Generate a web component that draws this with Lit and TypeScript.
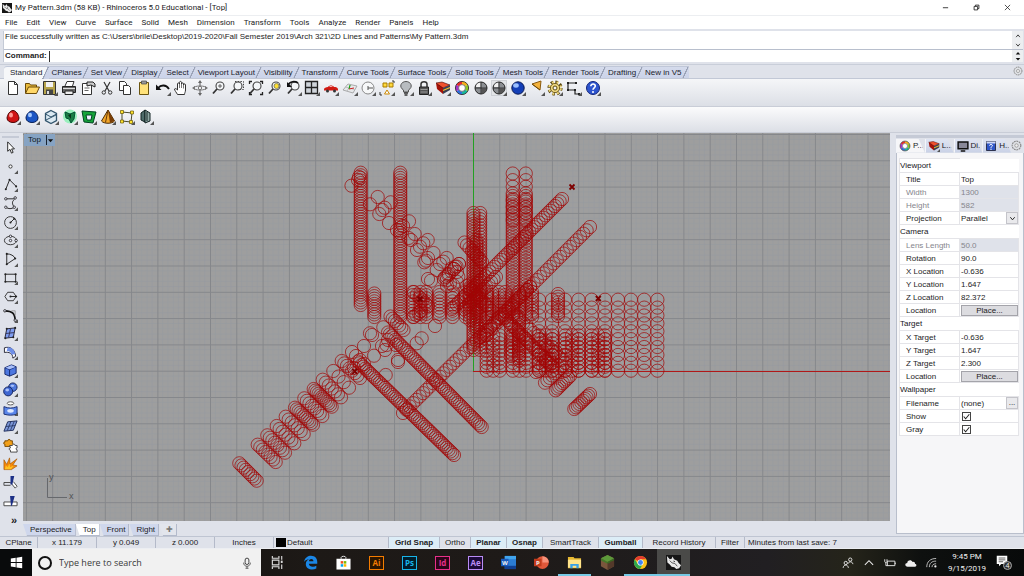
import { LitElement, html, svg, css } from "lit";
import { customElement } from "lit/decorators.js";
import { classMap } from "lit/directives/class-map.js";

type Pt = [number, number];

/* ---------- drawing geometry ---------- */

const R = 6.6;

function run(x1: number, y1: number, x2: number, y2: number, n: number): Pt[] {
  const out: Pt[] = [];
  for (let i = 0; i < n; i++) {
    const t = n > 1 ? i / (n - 1) : 0;
    out.push([x1 + (x2 - x1) * t, y1 + (y2 - y1) * t]);
  }
  return out;
}

const pattern: Pt[] = [
  ...run(360.7, 172.7, 360.7, 305, 52),
  ...run(400.3, 172.7, 400.3, 317, 56),
  ...run(374.3, 293.5, 374.3, 317, 10),
  [351.5, 185.7], [359, 177], [358, 180],
  [377.7, 197], [370, 204.3], [384.7, 207.7], [390.7, 202.3], [379.3, 214], [382.3, 210],
  [389, 223], [409, 221.3], [403, 226], [397, 230], [400, 233], [414.7, 234], [408.5, 238],
  [411, 240], [427.7, 240], [417, 250], [420, 246.7], [423.3, 243.3], [433.5, 253],
  [426, 260.7], [424.3, 262.3], [428, 258], [446.7, 258], [443.3, 261.7], [440, 264],
  [459, 264], [455, 266.7], [451.7, 268.3], [436.7, 270], [428, 279], [431, 280.7],
  [445, 277.3], [448.3, 275], [450, 283.3], [456.7, 281.7], [458.3, 276.7], [446.7, 280],
  [454, 269], [457, 272], [447, 286], [453, 285],
  ...run(444, 279, 459, 264, 7),
  ...run(464.5, 242.5, 482, 262, 8),
  ...run(473.5, 213, 473.5, 350, 52),
  ...run(480.2, 213, 480.2, 350, 46),
  ...run(476.5, 240, 476.5, 330, 34),
  ...run(470, 284, 470, 320, 12),
  ...run(464, 309, 496, 277, 14),
  ...run(467, 286, 492, 311, 10),
  ...run(512.7, 173.5, 512.7, 220, 8),
  ...run(525.8, 173.5, 525.8, 220, 8),
  ...run(512.7, 196, 512.7, 317, 44),
  ...run(525.8, 196, 525.8, 317, 44),
  ...run(562, 199, 452, 309, 48),
  [435, 326], [421.7, 338.3], [416.7, 343.3], [398, 362], [385.7, 375],
  ...run(590, 227, 527, 290, 20),
  ...run(527, 290, 480, 337, 14),
  ...run(480, 337, 403, 413, 24),
  ...[412.8, 420.5, 426.2, 439.5, 452.5, 465.8, 487, 492, 499, 505, 519, 532].flatMap((x) =>
    run(x, 292, x, 317, 9)
  ),
  ...run(414, 292, 428, 306, 6),
  ...run(414, 317, 421, 311, 4),
  ...run(484, 336, 512, 308, 9),
  ...run(490, 327, 530, 287, 14),
  ...[539, 552, 565, 578.5, 591.7, 605, 618, 631, 644.2, 657.4].flatMap((x) =>
    run(x, 299.7, x, 370.7, 10)
  ),
  ...run(558, 294, 558, 316, 9),
  ...[486.6, 499.7, 512.8, 526, 539, 552.2, 565.3, 578.5, 591.7, 604.8].flatMap((x) =>
    run(x, 335.3, x, 370.7, 10)
  ),
  ...[493.2, 519.4, 545.7, 572, 598.2].flatMap((x) => run(x, 335.3, x, 370.7, 8)),
  ...run(486.6, 318, 486.6, 335, 5),
  ...run(505, 318, 552, 366, 24),
  ...run(516, 316, 562, 360, 14),
  ...run(519, 318, 519, 358, 18),
  ...run(511, 326, 511, 356, 10),
  ...run(536, 372, 556, 352, 7),
  ...run(545, 382.7, 562, 366, 8),
  ...run(555.7, 390.3, 570, 376, 9),
  ...run(574.3, 409, 590, 394, 10),
  ...run(358, 361.5, 454, 455, 54),
  ...run(388, 332.5, 481.7, 427, 52),
  ...run(390.5, 316.5, 403.5, 330, 7),
  ...run(239.3, 463.3, 256.7, 480.7, 9),
  ...run(257.7, 444.7, 275.7, 462, 8),
  ...run(267.3, 435.3, 285, 452.7, 8),
  ...run(276.7, 426, 294.3, 443.3, 7),
  ...run(285.7, 416.7, 303.7, 434, 7),
  ...run(295, 407.7, 313, 424.7, 11),
  ...run(304.3, 398.3, 322.3, 416, 8),
  ...run(313.7, 389, 331.7, 406.7, 12),
  ...run(322.7, 379.7, 341, 397.3, 7),
  ...run(333.3, 371, 349, 387.7, 4),
  ...run(341.7, 361, 360, 378, 8),
  ...run(352, 352, 364, 364, 4),
  [364, 346], [370, 333.3], [372, 335], [383.3, 327.3], [374, 355.7], [385, 350], [382, 346],
  [386.5, 345], [388, 340], [396, 345], [354, 368], [398, 360],
];

const marks: Pt[] = [[572, 187], [598.3, 298.5], [354.7, 371.3], [420, 299]];

/* ---------- icon artwork, 16 x 16 ---------- */

const fly = svg`<path d="M16 12v4h-4z" fill="#555"/>`;
const dot = (x: number, y: number) => svg`<circle cx=${x} cy=${y} r="1.1" fill="#222"/>`;
const ring = (x: number, y: number) =>
  svg`<circle cx=${x} cy=${y} r="1.3" fill="#eef" stroke="#222" stroke-width=".9"/>`;
const lens = svg`<circle cx="9" cy="6" r="4" fill="#f4f6f8" stroke="#444" stroke-width="1.1"/><path d="M6 9l-4 4.500" stroke="#333" stroke-width="1.800"/>`;
const glassBall = svg`<circle cx="8" cy="8" r="6" fill="#8c8f93" stroke="#222"/><path d="M3 7c0-3 2-4 4.500-4.500V7z" fill="#f2f2f2"/><path d="M8.500 8.500h5c-.5 3-2 5-5 5z" fill="#555"/><path d="M8 2v12M2 8h12" fill="none" stroke="#222" stroke-width=".8"/>`;

const art: Record<string, unknown> = {
  New: svg`<path d="M3.500 1.500h6l3 3v10h-9z" fill="#fff" stroke="#333"/><path d="M9.500 1.500v3h3" fill="none" stroke="#333"/>`,
  Open: svg`<path d="M1.500 13V3.500h4l1 1.500h6v2" fill="#e9bb3c" stroke="#6b4a08"/><path d="M1.500 13.500l3-6.500h11l-3 6.500z" fill="#ffd768" stroke="#6b4a08"/>`,
  Save: svg`<path d="M1.500 1.500h12v13h-12z" fill="#b5a24a" stroke="#333"/><path d="M4 2h7v5H4z" fill="#f2f2f2"/><path d="M4 9.500h7v5H4z" fill="#444"/><path d="M5 11h2v3H5z" fill="#ddd"/>${fly}`,
  Print: svg`<path d="M4 6l2-4.500h7L11.500 6" fill="#fff" stroke="#333"/><path d="M1.500 6.500h13v6h-13z" fill="#666" stroke="#222"/><path d="M2 8.500h12" stroke="#ddd"/><path d="M4 11h8v3.500H4z" fill="#eee" stroke="#222"/>`,
  Properties: svg`<path d="M2.500 3.500h9v11h-9z" fill="#fff" stroke="#333"/><path d="M7 2h6l2 2v3l-4-2-4 1z" fill="#ccc" stroke="#222"/><path d="M4.500 8h5M4.500 10.500h4" stroke="#666"/>`,
  Cut: svg`<path d="M5 2l5 9M11 2l-5 9" stroke="#333" stroke-width="1.200"/><circle cx="4.800" cy="12.500" r="1.700" fill="none" stroke="#333"/><circle cx="11.200" cy="12.500" r="1.700" fill="none" stroke="#333"/>`,
  Copy: svg`<path d="M2.500 1.500h5l2 2v7h-7z" fill="#fff" stroke="#333"/><path d="M6.500 5.500h5l2 2v7h-7z" fill="#fff" stroke="#333"/>`,
  Paste: svg`<path d="M3.500 2.500h9v12h-9z" fill="#ffe27a" stroke="#6b5510"/><path d="M5.500 1h5v3h-5z" fill="#999" stroke="#444" stroke-width=".7"/>`,
  Undo: svg`<path d="M3 8c3-3.500 8-3.500 11 1" fill="none" stroke="#111" stroke-width="1.800"/><path d="M1 4.500V10h5.500z" fill="#111"/>${fly}`,
  Pan: svg`<path d="M4.500 14.500c-1-2-3-4-3-5.500 1-1 2 0 3 1V4c0-1.500 2-1.500 2 0V2.500c0-1.500 2-1.500 2 0V4c0-1.500 2-1.500 2 0v1c0-1.500 2-1.500 2 0v5c0 2-1 3-1 4.500z" fill="#fff" stroke="#333"/><path d="M6.500 4v4M8.500 4v4M10.500 5v3.500" stroke="#555" stroke-width=".8"/>`,
  Rotate: svg`<path d="M8 2v12" stroke="#555"/><path d="M8 0l2 3H6zM8 16l2-3H6z" fill="#666"/><ellipse cx="8" cy="8" rx="6.500" ry="2" fill="none" stroke="#777"/><path d="M0 8l3-2v4zM16 8l-3-2v4z" fill="#777"/><circle cx="8" cy="8" r="1.600" fill="#fff" stroke="#777"/>`,
  Zoom: svg`${lens}<path d="M7 6h4M9 4v4" stroke="#555" stroke-width=".9"/>`,
  "Zoom Window": svg`${lens}<path d="M6 1.500h8.500v8H9" fill="none" stroke="#444" stroke-dasharray="1.500 1.200"/>`,
  "Zoom Extents": svg`${lens}<path d="M1.500 4V1.500H4M12 1.500h2.500V4M14.500 12v2.500H12M4 14.500H1.500V12" fill="none" stroke="#222" stroke-width="1.300"/>`,
  "Zoom Selected": svg`${lens}<circle cx="9.500" cy="6" r="2.500" fill="#ffdf2e" stroke="#886"/>`,
  "Undo View": svg`${lens}<path d="M2 5c2-4 7-4 10-2" fill="none" stroke="#111" stroke-width="1.700"/><path d="M1 2v5h5z" fill="#111"/>${fly}`,
  "Four Views": svg`<path d="M1.500 1.500h12v12h-12z" fill="#cfd4da" stroke="#222" stroke-width="1.300"/><path d="M7.500 1v13M1 7.500h13" stroke="#222" stroke-width="1.300"/>${fly}`,
  Car: svg`<path d="M1 9.500c0-2 2-2 4-2.500 1-2 5-2 6 0 2 0 4 .5 4 2.500v1H1z" fill="#d11a12"/><path d="M6 7c.7-1 3-1 4 0z" fill="#fff"/><circle cx="4.500" cy="11" r="1.500" fill="#333"/><circle cx="11.500" cy="11" r="1.500" fill="#333"/>${fly}`,
  CPlane: svg`<path d="M1 10l5-6 9 2-4 7z" fill="#e6e8ea" stroke="#999" stroke-width=".8"/><path d="M3.500 7l9 2.500M9 5l-4 6" stroke="#aaa" stroke-width=".7"/><path d="M7 9l1-4" stroke="#0a0" /><path d="M7 9l5-1" stroke="#c22"/>${fly}`,
  "Set View": svg`<circle cx="8" cy="8" r="6" fill="#f7f8f9" stroke="#888"/><path d="M8 8h5M8 6v4" stroke="#555"/>${fly}`,
  Select: svg`<path d="M4 3h4v4H4zM10 3h4v4h-4z" fill="#ffda3c" stroke="#a77a00"/><path d="M5.500 14l2.500-4 2.500 4z" fill="#fff" stroke="#c80"/><path d="M1 12v3h2M13 1h2v2" fill="none" stroke="#333"/>${fly}`,
  Hide: svg`<path d="M5.500 10c-5-3-2.500-8.500 2.500-8.500S15.500 7 10.500 10v2h-5z" fill="#b8bcc0" stroke="#555"/><path d="M6 13h4M6.500 15h3" stroke="#333" stroke-width="1.300"/>${fly}`,
  Lock: svg`<path d="M5 7V4c0-3 6-3 6 0v3" fill="none" stroke="#333" stroke-width="1.500"/><path d="M3.500 7h9v7.500h-9z" fill="#555" stroke="#222"/><path d="M4.500 9.500h7M4.500 12h7" stroke="#aaa" stroke-width=".8"/>${fly}`,
  Layers: svg`<path d="M1 3l7 4v7L2 9z" fill="#a51208"/><path d="M1 3l6-1 8 3-7 3z" fill="#f0512d" stroke="#400" stroke-width=".6"/><path d="M8 8l7-3v5l-7 4z" fill="#3b3f52"/><path d="M8 10.500l7-3" stroke="#f2c230" stroke-width="1.300"/>${fly}`,
  Colour: svg`<g fill="none" stroke-width="3"><path d="M8 3a5 5 0 0 1 4.300 2.500" stroke="#f6b21a"/><path d="M12.300 5.500a5 5 0 0 1 0 5" stroke="#8ac926"/><path d="M12.300 10.500A5 5 0 0 1 8 13" stroke="#18b89a"/><path d="M8 13a5 5 0 0 1-4.300-2.500" stroke="#2f6fe0"/><path d="M3.700 10.500a5 5 0 0 1 0-5" stroke="#a233c9"/><path d="M3.700 5.500A5 5 0 0 1 8 3" stroke="#ea2c2c"/></g><circle cx="8" cy="8" r="6.600" fill="none" stroke="#222" stroke-width=".8"/><circle cx="8" cy="8" r="3.400" fill="#fff" stroke="#333" stroke-width=".6"/>`,
  Shade: glassBall,
  "Shade Selected": svg`<path d="M.5.500h15v15H.5z" fill="#e3e5e8" stroke="#b5b8be" stroke-dasharray="1 1"/>${glassBall}${fly}`,
  Render: svg`<circle cx="8" cy="8" r="6.200" fill="#1540b8" stroke="#0a1a55"/><ellipse cx="6" cy="5.500" rx="2.800" ry="2.200" fill="#9cc0ff"/>${fly}`,
  Spotlight: svg`<path d="M3 4l9-3-1 9z" fill="#f3b23c" stroke="#8a5a10"/><path d="M3 4l8 6" stroke="#6b4a08"/>${fly}`,
  Options: svg`<circle cx="8" cy="8" r="5.800" fill="none" stroke="#5a4810" stroke-width="3.600" stroke-dasharray="2.400 2.100"/><circle cx="8" cy="8" r="5.600" fill="none" stroke="#efd77c" stroke-width="2.600" stroke-dasharray="1.800 2.700" stroke-dashoffset="-.3"/><circle cx="8" cy="8" r="4.600" fill="#ecd57d" stroke="#5a4810" stroke-width=".8"/><circle cx="8" cy="8" r="2" fill="#f4f4f4" stroke="#5a4810"/>${fly}`,
  Dimension: svg`<path d="M2 3h7M2 3v7h7v4h5" fill="none" stroke="#222" stroke-width="1.200"/><path d="M1 2h2v2H1zM9 2h2v2H9zM1 9h2v2H1zM8 9h2v2H8zM12 13h2v2h-2z" fill="#222"/>${fly}`,
  Help: svg`<circle cx="8" cy="8" r="6.500" fill="#2e55cf" stroke="#12257a"/><path d="M5.800 6.200c0-3 4.700-2.800 4.500 0-.2 1.700-2.300 1.600-2.300 3.500" fill="none" stroke="#fff" stroke-width="1.600"/><circle cx="8" cy="12" r="1" fill="#fff"/>${fly}`,

  "Red Solid": svg`<path d="M8 1.500c3 0 5.500 4 6 7.500 0 6-12 6-12 0C2.500 5.500 5 1.500 8 1.500z" fill="#cf1414" stroke="#4b0505"/><ellipse cx="6" cy="6" rx="2" ry="2.500" fill="#ff9a93"/>${fly}`,
  "Blue Solid": svg`<path d="M8 2c3 0 6 4 6 7 0 6-12 6-12 0 0-3 3-7 6-7z" fill="#1b55c4" stroke="#071f55"/><ellipse cx="6" cy="6" rx="2" ry="2.300" fill="#a3c8ff"/>${fly}`,
  Wire: svg`<path d="M8 1.500l5.500 3v7L8 14.500l-5.500-3v-7z" fill="#dbe9f2" stroke="#34566e" stroke-width="1.300"/><path d="M2.500 5l5.500 3 5.500-3M3 11l10-5" fill="none" stroke="#34566e"/>${fly}`,
  Glow: svg`<circle cx="8" cy="7.500" r="7" fill="#9af0bd"/><path d="M3 3l5 2 5-2-1 7-3 4-2-4-3-1z" fill="#1b7d45" stroke="#053"/><path d="M6 6l3-1v5z" fill="#07351c"/>${fly}`,
  "Box Edit": svg`<path d="M1 2l14 1-3 11-9-1z" fill="#17a33a" stroke="#042"/><path d="M5 6h6l-1 5H6z" fill="#eef" stroke="#042"/>${fly}`,
  Cone: svg`<path d="M8 1L1.500 12c2 3 11 3 13 0z" fill="#f0a52a" stroke="#4b2c05"/><path d="M8 1l2 13 4.500-2z" fill="#7a3f08"/><path d="M8 1L5.500 13.500" stroke="#6a3b07"/>${fly}`,
  Cage: svg`<path d="M3 3l10 1-1 9-9-1z" fill="none" stroke="#4b4b30"/><g fill="#ffe32e" stroke="#665500" stroke-width=".7"><path d="M1.500 1.500h3v3h-3zM11.500 2h3v3h-3zM10.500 11.500h3v3h-3zM1.500 11h3v3h-3z"/></g>${fly}`,
  Shell: svg`<path d="M3 4l4-3v12l-4-2z" fill="#4d6a69" stroke="#122"/><path d="M7 1l5 3v8l-5 2z" fill="#8fa8a4" stroke="#122"/><path d="M9 3v9" stroke="#122"/>${fly}`,

  Pointer: svg`<path d="M5 2v10l2.500-2 1.500 4 1.800-.8-1.600-3.700h3z" fill="#fff" stroke="#222"/>`,
  Point: svg`<circle cx="8" cy="8" r="1.700" fill="#fff" stroke="#333"/>${fly}`,
  Polyline: svg`<path d="M3 13L7 3l7 7" fill="none" stroke="#222"/>${dot(3, 13)}${dot(7, 3)}${dot(14, 10)}${fly}`,
  Curve: svg`<path d="M3 3h10M12 4c-3 2-2 5 0 8M3 12c3 2 6 2 9 0" fill="none" stroke="#222"/>${ring(3, 3)}${ring(13, 2)}${ring(3, 12)}${ring(12, 12)}${fly}`,
  Circle: svg`<circle cx="8" cy="8" r="6.300" fill="none" stroke="#333"/><path d="M8 8l4-4" stroke="#222"/>${dot(8, 8)}${dot(12, 4)}${fly}`,
  Ellipse: svg`<ellipse cx="8" cy="8" rx="6.500" ry="4.500" fill="none" stroke="#333"/>${ring(8, 3.5)}${ring(8, 8)}${ring(14, 8)}${fly}`,
  Arc: svg`<path d="M4 2v11l9-6M4 2c4 0 8 2 9 5" fill="none" stroke="#222"/>${dot(4, 2)}${dot(4, 13)}${dot(13, 7)}${fly}`,
  Rectangle: svg`<path d="M2.500 4.500h11v8h-11z" fill="none" stroke="#222"/>${dot(2.5, 12.5)}${dot(13.5, 4.5)}${dot(2.5, 4.5)}${dot(13.5, 12.5)}${fly}`,
  Polygon: svg`<path d="M5 3.500h6L14 8l-3 4.500H5L2 8z" fill="none" stroke="#333"/><path d="M8 8h6" stroke="#222"/>${dot(8, 8)}${dot(14, 8)}${fly}`,
  Fillet: svg`<path d="M2 3c8 0 11 3 11 11" fill="none" stroke="#111" stroke-width="1.800"/><path d="M9 3h4v5" fill="none" stroke="#999"/>${ring(2, 3)}${ring(13, 13)}${fly}`,
  "Surface Points": svg`<path d="M4 3l9-1-2 10-9 1z" fill="#7f9df0" stroke="#223"/><path d="M3 8l9-1M8 3L6 12" stroke="#335"/>${dot(4, 3)}${dot(13, 2)}${dot(11, 12)}${dot(2.5, 13)}${fly}`,
  Loft: svg`<path d="M1.500 3c7-2 11 2 12 9l-3 2c0-5-4-7-9-6z" fill="#fff" stroke="#223"/><path d="M5 2.500c5 0 7 3 8 7l-4 1C9 8 7 6.500 4 6.500z" fill="#6f8fe8"/>${fly}`,
  Box: svg`<path d="M2 5l7-3 5 2v7l-7 3-5-2z" fill="#4d77e0" stroke="#16296b"/><path d="M2 5l5 2 7-3M7 7v7" fill="none" stroke="#16296b"/><path d="M2.500 5L9 2.500l4.500 1.700L7 6.700z" fill="#a9c0fb"/>${fly}`,
  Union: svg`<circle cx="10.500" cy="5.500" r="4.500" fill="#4f78dc" stroke="#14245e"/><circle cx="5.500" cy="10" r="4.800" fill="#3e66d2" stroke="#14245e"/><ellipse cx="4.500" cy="8.500" rx="2" ry="1.500" fill="#a9c0fb"/><ellipse cx="10" cy="4" rx="2" ry="1.200" fill="#a9c0fb"/>${fly}`,
  Project: svg`<ellipse cx="8" cy="2.500" rx="3.500" ry="1.700" fill="#fff" stroke="#555"/><path d="M1 6c5 2 9 2 14 0v8c-5 1.500-9 1.500-14 0z" fill="#5a86ea" stroke="#1a2d70"/><ellipse cx="8" cy="10.500" rx="3.500" ry="2" fill="#dfe9ff"/>${fly}`,
  Mesh: svg`<path d="M5 3l10-1-4 10-10 1z" fill="#7c97d8" stroke="#1f2d5a"/><path d="M3 8l10-1M8.500 2.500L4.500 12.500M12 2.500L8 12" stroke="#1f2d5a" stroke-width=".8"/>${fly}`,
  Puzzle: svg`<path d="M2 3h3c0-2 3-2 3 0h2v3c2 0 2 3 0 3H2V6.500c-2 0-2-2 0-2z" fill="#f2a019" stroke="#7a4a00"/><path d="M7 8h3c0-2 3-2 3 0h2v2.500c-1.500 0-1.500 2 0 2V15H8v-2c-2 0-2-2.500 0-2.500z" fill="#fff" stroke="#444"/>`,
  Explode: svg`<path d="M1 14.500V4l3 5 3-7 .5 6.500L15 3l-4.500 6.500 4.500 1-6 4z" fill="#f58a0b" stroke="#a35400" stroke-width=".7"/><path d="M2 14l1-4 2 2 2-4 .5 4 4-2-3 4z" fill="#ffc21f"/>`,
  Trim: svg`<path d="M1 8h7l5 6 2-2-4-5" fill="#fff" stroke="#444"/><path d="M1 8v3h7" fill="none" stroke="#444"/><path d="M8 1h4L10 10H8z" fill="#1c2f86"/>`,
  Split: svg`<path d="M1 8.500h14v4H1z" fill="#fff" stroke="#444"/><path d="M7.500 2h5l-3 10.500h-1z" fill="#1c2f86"/>`,
  Monitor: svg`<path d="M1.500 2.500h13v9h-13z" fill="#889" stroke="#111" stroke-width="2"/><path d="M5 14.500h6" stroke="#111" stroke-width="2"/>`,
  "Help Page": svg`<path d="M2 2h12v12H2z" fill="#2f56c8" stroke="#112"/><path d="M2 2h12v2.500H2z" fill="#cfd8f5"/><path d="M6 7.500c0-2 4-2 4 0-.2 1.200-2 1.200-2 3" fill="none" stroke="#fff" stroke-width="1.300"/><circle cx="8" cy="12.300" r=".9" fill="#fff"/>`,
  Gear: svg`<circle cx="8" cy="8" r="6.300" fill="#dfe1e5" stroke="#888" stroke-width="1.600" stroke-dasharray="2.600 1"/><circle cx="8" cy="8" r="2.500" fill="#eee" stroke="#888"/>`,
  Tick: svg`<path d="M3 8l3.500 4L13 4" fill="none" stroke="#222" stroke-width="1.800"/>`,

  Rhino: svg`<path d="M0 0h16v16H0z" fill="#161616"/><path d="M1 1l3 3.500L6 4l1-2.500 1.500 3L12 6l1.500 2.500L16 11l-2 3-3 1-2-2-3-.5L4 10 1.500 8z" fill="#e9e9e9"/><path d="M4 6l2.500 2.500 3 .5 2.500 3" fill="none" stroke="#444" stroke-width=".9"/><path d="M8 6.500l1.500.5" stroke="#222"/>`,
  Start: svg`<path d="M1 3l6-.8v5.300H1zM8 2l7-1v6.500H8zM1 8.500h6v5.300L1 13zM8 8.500h7V15l-7-1z" fill="#fff"/>`,
  Mic: svg`<rect x="5.500" y="1.500" width="5" height="8.500" rx="2.500" fill="none" stroke="#333" stroke-width="1.200"/><path d="M3.500 7.500c0 6.500 9 6.500 9 0M8 12.500V15M6 15h4" fill="none" stroke="#333"/>`,
  "Task View": svg`<path d="M2.500 1v2.500h7V1M2.500 15v-2.500h7V15M2.500 5.500h7v5h-7zM12.500 1v4M12.500 10v5" fill="none" stroke="#ddd" stroke-width="1.200"/><path d="M11.500 6h2v2.500h-2z" fill="#ddd"/>`,
  Edge: svg`<path d="M1 7.500C2 2.500 5.500.8 8.500.8c4.500 0 6.800 3.200 6.700 6.700v1.800H6.200c.2 3.500 5 4 8 2.200v3C9.500 16.800 2.800 15 3 9.500 3.100 7 4.500 5.300 6.500 4.600 4.500 4.600 2.300 5.600 1 7.500zM6.300 6.700h4.800c0-3.200-4.400-3.200-4.800 0z" fill="#1b87e6"/>`,
  Store: svg`<path d="M5.500 4V2.500c0-1.500 5-1.500 5 0V4" fill="none" stroke="#eee"/><path d="M.5 4h15v11.500H.5z" fill="#fff"/><path d="M5 6.500h2.700v2.700H5z" fill="#f05022"/><path d="M8.300 6.500H11v2.700H8.300z" fill="#7fba00"/><path d="M5 9.800h2.700v2.700H5z" fill="#00a4ef"/><path d="M8.300 9.800H11v2.700H8.300z" fill="#ffb900"/>`,
  PowerPoint: svg`<circle cx="9" cy="8" r="6.800" fill="#e0583a"/><path d="M9 1.200A6.800 6.800 0 0 1 15.800 8H9z" fill="#f7927a"/><path d="M0 4h8v8H0z" fill="#c13b1b"/>`,
  Word: svg`<path d="M4 1h12v14H4z" fill="#2b7cd3"/><path d="M4 1h12v3.500H4z" fill="#41a5ee"/><path d="M4 11.500h12V15H4z" fill="#103f91"/><path d="M0 4h8v8H0z" fill="#185abd"/>`,
  Explorer: svg`<path d="M1 2h6l1 1.500h7V14H1z" fill="#e8b931"/><path d="M1 5h14v8.500H1z" fill="#ffe38a"/><path d="M3.500 14V9.500h9V14h-2.500v-2.500H6V14z" fill="#3aa0e6"/>`,
  Minecraft: svg`<path d="M8 0l7 3.500V12l-7 4-7-4V3.500z" fill="#7a563c"/><path d="M8 7.500V16l7-4V4z" fill="#54392a"/><path d="M8 0l7 3.500L8 7.500 1 3.500z" fill="#5c9a3a"/><path d="M1 3.500l7 4V9l-1.500-.5-2-1-1.500-.5L1 5.500z" fill="#437a29"/><path d="M8 7.500l7-4v2l-1.500 1-2 .5-1.500 1.500L8 9z" fill="#386a22"/>`,
  Chrome: svg`<circle cx="8" cy="8" r="7" fill="#fbc116"/><path d="M8 8L1.900 4.500A7 7 0 0 1 14.100 4.500H8z" fill="#e33b2e"/><path d="M1.900 4.500A7 7 0 0 0 7.500 15l3-5.500L8 8 5 9.500z" fill="#2da94f"/><circle cx="8" cy="8" r="3.300" fill="#fff"/><circle cx="8" cy="8" r="2.600" fill="#4285f4"/>`,
  People: svg`<circle cx="11" cy="3.500" r="2.200" fill="none" stroke="#eee" stroke-width="1.200"/><path d="M8 9c1-3.500 6-3.500 6.500.5" fill="none" stroke="#eee" stroke-width="1.200"/><circle cx="5" cy="8" r="2.200" fill="none" stroke="#eee" stroke-width="1.200"/><path d="M1.500 14.500c.5-5 6.500-5 7 0" fill="none" stroke="#eee" stroke-width="1.200"/>`,
  Chevron: svg`<path d="M2.500 10.500L8 5l5.500 5.500" fill="none" stroke="#eee" stroke-width="1.400"/>`,
  Battery: svg`<path d="M4.500 5.500h10v6h-10z" fill="none" stroke="#eee" stroke-width="1.200"/><path d="M15 7.500v2M1 3v3c0 2 3 2 3 0V3M2.500 8v3.500H5" fill="none" stroke="#eee" stroke-width="1.200"/>`,
  Cloud: svg`<path d="M3.500 13C-.5 13-.5 8 3 8c0-4 5.500-5 7-1.500 2.500-.5 3.500 1 3.300 2.500 2.500.3 2.500 4 0 4z" fill="#eee"/>`,
  Wifi: svg`<g fill="none" stroke="#ccc" stroke-width="1.200"><path d="M1 13.500C1 6 6 2 13.500 2"/><path d="M4.500 13.500C4.500 8 8 5.500 13.500 5.500"/><path d="M8 13.500C8 10.500 10 9 13.500 9"/></g><circle cx="12.500" cy="12.500" r="1.500" fill="#eee"/>`,
  Notes: svg`<path d="M1 1h14v11H7l-3 3v-3H1z" fill="#fff"/><path d="M3.500 4h9M3.500 6.500h9M3.500 9h6" stroke="#333"/>`,
  Down: svg`<path d="M2 5l6 7 6-7z" fill="#111"/>`,
  Up: svg`<path d="M2 12l6-7 6 7z" fill="#111"/>`,
  ChevDown: svg`<path d="M3 5l5 6 5-6" fill="none" stroke="#222" stroke-width="2.200"/>`,
  ChevUp: svg`<path d="M3 11l5-6 5 6" fill="none" stroke="#222" stroke-width="2.200"/>`,
  Min: svg`<path d="M2 8.500h12" stroke="#111" stroke-width="1.800"/>`,
  Max: svg`<path d="M2.500 5.500h8v8h-8zM5.500 5V2.500h8v8H11" fill="none" stroke="#111" stroke-width="1.800"/>`,
  Close: svg`<path d="M2 2l12 12M14 2L2 14" stroke="#111" stroke-width="1.600"/>`,
};

const icon = (name: string, cls = "") =>
  html`<svg class="icon ${cls}" viewBox="0 0 16 16" aria-hidden="true">${art[name]}</svg>`;

const toolButton = (name: string) =>
  html`<button class="tool" type="button" aria-label=${name}>${icon(name)}</button>`;

/* ---------- labels ---------- */

const menus = ["File", "Edit", "View", "Curve", "Surface", "Solid", "Mesh", "Dimension", "Transform",
  "Tools", "Analyze", "Render", "Panels", "Help"];

const toolTabs = ["Standard", "CPlanes", "Set View", "Display", "Select", "Viewport Layout", "Visibility",
  "Transform", "Curve Tools", "Surface Tools", "Solid Tools", "Mesh Tools", "Render Tools", "Drafting",
  "New in V5"];

const mainTools = ["New", "Open", "Save", "Print", "Properties", "Cut", "Copy", "Paste", "Undo", "Pan",
  "Rotate", "Zoom", "Zoom Window", "Zoom Extents", "Zoom Selected", "Undo View", "Four Views", "Car",
  "CPlane", "Set View", "Select", "Hide", "Lock", "Layers", "Colour", "Shade", "Shade Selected", "Render",
  "Spotlight", "Options", "Dimension", "Help"];

const secondTools = ["Red Solid", "Blue Solid", "Wire", "Glow", "Box Edit", "Cone", "Cage", "Shell"];

const sideTools = ["Pointer", "Point", "Polyline", "Curve", "Circle", "Ellipse", "Arc", "Rectangle",
  "Polygon", "Fillet", "Surface Points", "Loft", "Box", "Union", "Project", "Mesh", "Puzzle", "Explode",
  "Trim", "Split"];

type Row = { label: string; value: string; kind?: "off" | "select" | "button" | "check" | "file" };

const groups: { title: string; rows: Row[] }[] = [
  { title: "Viewport", rows: [
    { label: "Title", value: "Top" },
    { label: "Width", value: "1300", kind: "off" },
    { label: "Height", value: "582", kind: "off" },
    { label: "Projection", value: "Parallel", kind: "select" },
  ] },
  { title: "Camera", rows: [
    { label: "Lens Length", value: "50.0", kind: "off" },
    { label: "Rotation", value: "90.0" },
    { label: "X Location", value: "-0.636" },
    { label: "Y Location", value: "1.647" },
    { label: "Z Location", value: "82.372" },
    { label: "Location", value: "Place...", kind: "button" },
  ] },
  { title: "Target", rows: [
    { label: "X Target", value: "-0.636" },
    { label: "Y Target", value: "1.647" },
    { label: "Z Target", value: "2.300" },
    { label: "Location", value: "Place...", kind: "button" },
  ] },
  { title: "Wallpaper", rows: [
    { label: "Filename", value: "(none)", kind: "file" },
    { label: "Show", value: "", kind: "check" },
    { label: "Gray", value: "", kind: "check" },
  ] },
];

const base = css`
  :host { box-sizing: border-box; font: 8px/12px "Liberation Sans", sans-serif; color: #1c1c24; }
  *, *::before, *::after { box-sizing: border-box; }
  button, input, select { font: inherit; color: inherit; margin: 0; padding: 0; border: 0; background: none; border-radius: 0; outline: 0; }
  .icon { display: block; width: 16px; height: 16px; flex: none; }
  .tool { width: 18px; height: 18px; display: flex; align-items: center; justify-content: center; flex: none; }
`;

/* ---------- viewport ---------- */

@customElement("rhino-viewport")
class RhinoViewport extends LitElement {
  static styles = [base, css`
    :host { display: flex; flex: 1; min-width: 0; min-height: 0; position: relative; overflow: hidden; background: #9e9e9e; }
    .canvas { display: block; flex: 1; min-width: 0; height: 100%; }
    .axis-y { fill: #22a022; }
    .axis-x { fill: #b01818; }
    .title { position: absolute; top: 1px; left: 1px; height: 12px; padding: 0 1px 0 4px; display: flex; align-items: center; gap: 5px; background: #86a3c3; color: #101820; }
    .drop { width: 8px; height: 10px; border-left: 1px solid #1a2430; display: flex; align-items: center; }
    .drop .icon { width: 7px; height: 7px; }
  `];

  render() {
    return html`
      <svg class="canvas" role="img" aria-label="Top viewport">
        <defs>
          <pattern id="grid" width="26.3" height="26.3" patternUnits="userSpaceOnUse" x="25.900" y="160.300">
            <path d="M5.300 0v26.300M10.600 0v26.300M15.800 0v26.300M21.100 0v26.300M0 5.300h26.300M0 10.600h26.300M0 15.800h26.300M0 21.100h26.300" stroke="#949aa1" stroke-width=".6"/>
            <path d="M.5 0v26.300M0 .5h26.300" stroke="#85878b" stroke-width="1"/>
          </pattern>
        </defs>
        <g transform="translate(-23 -133)">
          <rect x="23" y="133" width="4000" height="3000" fill="url(#grid)"/>
          <rect class="axis-y" x="473" y="100" width="1" height="271"/>
          <rect class="axis-x" x="473" y="371" width="4000" height="1"/>
          <g fill="none" stroke="#a00404" stroke-width=".7">
            ${pattern.map(([x, y]) => svg`<circle cx=${x} cy=${y} r=${R}/>`)}
          </g>
          <g stroke="#7d0000" stroke-width="1.800">
            ${marks.map(([x, y]) => svg`<path d="M${x - 2.5} ${y - 2.5}l5 5M${x + 2.5} ${y - 2.5}l-5 5"/>`)}
          </g>
          <path d="M47.500 478v19.500H67" fill="none" stroke="#66686c"/>
          <text x="49" y="480" font-size="9" fill="#505256">y</text>
          <text x="69" y="499" font-size="9" fill="#505256">x</text>
        </g>
      </svg>
      <div class="title">Top<span class="drop">${icon("Down")}</span></div>
    `;
  }
}

/* ---------- property panel ---------- */

@customElement("property-panel")
class PropertyPanel extends LitElement {
  static styles = [base, css`
    :host { display: flex; flex-direction: column; flex: none; width: 134px; padding: 2px 0 2px 6px; background: #dfe2ea; }
    .grip { height: 3px; background: #c5cad6; }
    .tabs { display: flex; align-items: center; height: 15px; padding-right: 1px; }
    .tab { flex: 1; min-width: 0; height: 14px; display: flex; align-items: center; gap: 2px; padding-left: 2px; background: linear-gradient(#dfe4f2, #c9d1e6); border-left: 1px solid #f4f6fa; clip-path: polygon(0 0, 78% 0, 100% 100%, 0 100%); text-align: left; }
    .tab.on { background: #f6f6f8; }
    .tab .icon { width: 12px; height: 12px; }
    .gear { width: 12px; height: 12px; }
    .gear .icon { width: 11px; height: 11px; }
    .body { flex: 1; border: 1px solid #b9bfcc; border-top: 0; background: #f6f6f8; padding: 5px 4px 0 2px; }
    .props { width: 100%; border-collapse: collapse; table-layout: fixed; border-bottom: 1px solid #dcdce0; }
    .group { height: 14px; padding: 0; text-align: left; font-weight: normal; color: #16161c; }
    .name, .value { height: 13px; padding: 0; border: 1px solid #e4e4e8; background: #fff; font-weight: normal; text-align: left; line-height: 11px; }
    .name { width: 60px; padding-left: 6px; }
    .off { color: #85858c; }
    .value.off { background: #dfe2ea; }
    .field { display: block; width: 100%; height: 11px; padding-left: 1px; line-height: 11px; }
    .pair { display: flex; height: 11px; align-items: center; }
    .pick { flex: 1; min-width: 0; appearance: none; height: 11px; padding-left: 1px; }
    .chev { width: 12px; height: 12px; display: flex; align-items: center; justify-content: center; background: #e9e9ec; border: 1px solid #c4c4ca; flex: none; line-height: 8px; }
    .chev .icon { width: 7px; height: 7px; }
    .place { display: block; width: calc(100% - 1px); height: 11px; line-height: 9px; margin-left: 1px; border: 1px solid #a4a4aa; background: #dcdce0; text-align: center; }
    .check { display: grid; width: 9px; height: 9px; margin-left: 2px; }
    .check > * { grid-area: 1 / 1; }
    .check .icon { width: 9px; height: 9px; pointer-events: none; visibility: hidden; }
    .box { appearance: none; width: 9px; height: 9px; border: 1px solid #444; background: #fff; }
    .box:checked + .icon { visibility: visible; }
  `];

  private cell(row: Row, id: string) {
    switch (row.kind) {
      case "select":
        return html`<span class="pair"><select class="pick" id=${id}><option>${row.value}</option></select><span class="chev">${icon("ChevDown")}</span></span>`;
      case "button":
        return html`<button class="place" id=${id} type="button">${row.value}</button>`;
      case "file":
        return html`<span class="pair"><input class="pick" id=${id} .value=${row.value}><button class="chev" type="button">...</button></span>`;
      case "check":
        return html`<span class="check"><input class="box" id=${id} type="checkbox" checked>${icon("Tick")}</span>`;
      default:
        return html`<input class="field" id=${id} .value=${row.value} ?readonly=${row.kind === "off"}>`;
    }
  }

  render() {
    const tabs = [["Colour", "P..."], ["Layers", "L..."], ["Monitor", "Di..."], ["Help Page", "H..."]];
    return html`
      <div class="grip"></div>
      <div class="tabs">
        ${tabs.map(([ic, label], i) => html`<button type="button" class=${classMap({ tab: true, on: i === 0 })}>${icon(ic)}${label}</button>`)}
        <button class="gear" type="button" aria-label="Panel options">${icon("Gear")}</button>
      </div>
      <div class="body">
        <table class="props">
          <colgroup><col class="name"><col></colgroup>
          ${groups.map((g, gi) => html`
            <tbody>
              <tr><th class="group" colspan="2" scope="colgroup">${g.title}</th></tr>
              ${g.rows.map((r, ri) => {
                const id = `p${gi}-${ri}`;
                const off = r.kind === "off";
                return html`<tr>
                  <th scope="row" class=${classMap({ name: true, off })}><label for=${id}>${r.label}</label></th>
                  <td class=${classMap({ value: true, off })}>${this.cell(r, id)}</td>
                </tr>`;
              })}
            </tbody>`)}
        </table>
      </div>
    `;
  }
}

/* ---------- taskbar ---------- */

@customElement("task-bar")
class TaskBar extends LitElement {
  static styles = [base, css`
    :host { display: flex; flex: none; height: 27px; background: linear-gradient(90deg, #0b0b0c, #1d1916 30%, #1e1a18 50%, #211f22 75%, #25241a 83%, #0e100f 90%, #080a0a); color: #f2f2f2; font-family: "Open Sans", sans-serif; }
    .start { width: 32px; display: flex; align-items: center; justify-content: center; background: #090b0c; }
    .start .icon { width: 13px; height: 13px; }
    .search { width: 229px; display: flex; align-items: center; gap: 7px; padding: 0 8px 0 6px; background: #f1f1f1; color: #333; }
    .cortana { width: 14px; height: 14px; border: 2px solid #111; border-radius: 50%; }
    .query { flex: 1; min-width: 0; font: 9px/14px "Open Sans", sans-serif; }
    .query::placeholder { color: #3a3a3a; opacity: 1; }
    .search .icon { width: 12px; height: 12px; }
    .app { width: 33px; display: flex; align-items: center; justify-content: center; border-bottom: 2px solid transparent; padding-top: 2px; }
    .app .icon { width: 15px; height: 15px; }
    .open { border-color: #76c9e4; background-clip: padding-box; }
    .active { background: #4a4a48; }
    .adobe { width: 15px; height: 14px; border: 1px solid; font: bold 8px/12px "Open Sans", sans-serif; text-align: center; }
    .ai { color: #f57c00; background: #2c1600; }
    .ps { color: #19b4e8; background: #001d2b; }
    .id { color: #e8308a; background: #2c0519; }
    .ae { color: #b98cf5; background: #1c0a3a; }
    .office { display: grid; place-items: center start; }
    .office > * { grid-area: 1 / 1; }
    .letter { width: 8px; text-align: center; font: bold 6px/8px "Open Sans", sans-serif; }
    .tray { margin-left: auto; display: flex; align-items: center; padding-right: 6px; gap: 9px; }
    .tray .icon { width: 12px; height: 12px; }
    .clock { width: 40px; text-align: center; font: 8px/12px "Roboto", sans-serif; white-space: nowrap; }
    .notes { display: grid; padding-right: 6px; }
    .notes > * { grid-area: 1 / 1; }
    .badge { width: 9px; height: 9px; margin: 6px 0 0 7px; border-radius: 50%; background: #333; border: 1px solid #aaa; font: 7px/7px "Open Sans", sans-serif; text-align: center; }
  `];

  private app(name: string, content: unknown, cls = "") {
    return html`<button class="app ${cls}" type="button" aria-label=${name}>${content}</button>`;
  }

  render() {
    return html`
      <button class="start" type="button" aria-label="Start">${icon("Start")}</button>
      <label class="search"><span class="cortana"></span><input class="query" type="text" placeholder="Type here to search">${icon("Mic")}</label>
      ${this.app("Task View", icon("Task View"))}
      ${this.app("Edge", icon("Edge"))}
      ${this.app("Store", icon("Store"))}
      ${["Ai", "Ps", "Id", "Ae"].map((t) => this.app(t, html`<span class="adobe ${t.toLowerCase()}">${t}</span>`))}
      ${this.app("Word", html`<span class="office">${icon("Word")}<span class="letter">W</span></span>`)}
      ${this.app("PowerPoint", html`<span class="office">${icon("PowerPoint")}<span class="letter">P</span></span>`)}
      ${this.app("File Explorer", icon("Explorer"), "open")}
      ${this.app("Minecraft", icon("Minecraft"))}
      ${this.app("Chrome", icon("Chrome"), "open")}
      ${this.app("Rhinoceros", icon("Rhino"), "open active")}
      <div class="tray">
        ${["People", "Chevron", "Battery", "Cloud", "Wifi"].map((n) => icon(n))}
        <div class="clock"><div>9:45 PM</div><div>9/15/2019</div></div>
        <button class="notes" type="button" aria-label="Notifications">${icon("Notes")}<span class="badge">4</span></button>
      </div>
    `;
  }
}

/* ---------- application ---------- */

@customElement("app-root")
class AppRoot extends LitElement {
  static styles = [base, css`
    :host { display: flex; flex-direction: column; height: 100vh; overflow: hidden; background: #dfe2ea; }
    .titlebar { display: flex; align-items: center; height: 15px; padding: 0 13px 0 2px; gap: 3px; background: #fff; font-family: "Roboto", sans-serif; flex: none; }
    .titlebar > .icon { width: 10px; height: 10px; }
    .caption { flex: 1; }
    .window { display: flex; gap: 24px; }
    .window .icon { width: 7px; height: 7px; }
    .menubar { display: flex; gap: 9px; height: 14px; padding-left: 5px; background: #fff; border-top: 1px solid #eceef1; font-family: "Roboto", sans-serif; flex: none; }
    .menubar button { line-height: 13px; }
    .command { display: grid; grid-template-columns: 1fr 11px; margin: 2px 1px 0 3px; border-left: 1px solid #c4cad6; background: #fff; flex: none; }
    .history { height: 18px; padding-left: 1px; line-height: 11px; }
    .spin { display: flex; flex-direction: column; justify-content: space-around; align-items: center; background: #eceef0; }
    .spin .icon { width: 6px; height: 6px; }
    .prompt { grid-column: 1; display: flex; align-items: center; height: 13px; border-top: 1px solid #b8bfcd; padding-left: 1px; font-weight: bold; }
    .entry { flex: 1; margin-left: 2px; height: 11px; border-left: 1px solid #333; }
    .spin.low { border-top: 1px solid #b8bfcd; }
    .tooltabs { display: flex; align-items: end; height: 15px; margin-top: 2px; padding: 0 1px 0 4px; border-top: 1px solid #c9ced9; border-bottom: 1px solid #c2c8d6; flex: none; }
    .ttab { height: 12px; line-height: 12px; padding: 0 7px 0 2px; background: linear-gradient(115deg, transparent 44%, #9aa2b6 46%, #9aa2b6 54%, transparent 56%) right / 7px 12px no-repeat, linear-gradient(#d5dbec, #cbd3e9); border-top: 1px solid #c0c7d8; color: #20222c; white-space: nowrap; }
    .ttab.on { background: linear-gradient(115deg, #f6f7f9 44%, #9aa2b6 46%, #9aa2b6 54%, #cdd5ea 56%) right / 7px 13px no-repeat, #f6f7f9; height: 13px; margin-bottom: -1px; padding-left: 6px; border-radius: 3px 0 0 0; }
    .tooltabs .gear { margin: 0 0 2px auto; }
    .gear .icon { width: 10px; height: 10px; }
    .bar { padding: 0 0 0 4px; background: linear-gradient(#f5f6f8, #dcdfe6); border-bottom: 1px solid #c9cdd7; flex: none; }
    .strip { display: flex; justify-content: space-between; max-width: 598px; }
    .bar.main { height: 28px; }
    .bar.second { height: 26px; background: linear-gradient(#fbfbfc, #dcdfe6); }
    .short { display: flex; gap: 1px; padding-top: 1px; }
    .work { display: flex; flex: 1; min-height: 0; }
    .side { width: 22px; flex: none; display: flex; flex-direction: column; align-items: center; justify-content: space-between; padding: 0 2px 7px 0; margin-right: 1px; }
    .side .icon { width: 15px; height: 15px; }
    .grip { width: 17px; height: 2px; margin-top: 3px; background: #c5cad6; }
    .more { font: bold 11px/16px "Liberation Sans", sans-serif; align-self: end; height: 18px; padding-right: 3px; }
    .center { flex: 1; min-width: 0; display: flex; flex-direction: column; }
    .viewtabs { display: flex; height: 15px; padding-top: 3px; flex: none; }
    .vtab { height: 12px; line-height: 11px; padding: 0 3px 0 7px; background: #cfd7ec; clip-path: polygon(0 0, 100% 0, 100% 100%, 4px 100%); border-right: 1px solid #b3bacb; border-bottom: 1px solid #b3bacb; }
    .vtab.on { background: #fff; }
    .vtab.add { background: #e2e5ec; color: #777; }
    .status { display: flex; height: 13px; border-top: 1px solid #bfc5d2; border-bottom: 1px solid #eceef2; flex: none; line-height: 12px; text-align: center; white-space: nowrap; overflow: hidden; }
    .cell { border-right: 1px solid #b4bac9; flex: none; }
    .cell.on { background: #dcedf7; font-weight: bold; }
    .w31 { width: 31px; } .w36 { width: 36px; } .w38 { width: 38px; } .w44 { width: 44px; } .w51 { width: 51px; }
    .w56 { width: 56px; } .w59 { width: 59px; } .w73 { width: 73px; } .w29 { width: 29px; } .w115 { width: 115px; }
    .layer { display: flex; align-items: center; gap: 1px; padding-left: 2px; }
    .swatch { width: 10px; height: 9px; background: #000; }
    .fill { flex: 1; text-align: left; padding-left: 3px; }
  `];

  render() {
    const cells: [string, string, boolean][] = [
      ["Grid Snap", "w51", true], ["Ortho", "w31", false], ["Planar", "w36", true], ["Osnap", "w36", true],
      ["SmartTrack", "w56", false], ["Gumball", "w44", true], ["Record History", "w73", false], ["Filter", "w29", false],
    ];
    return html`
      <header class="titlebar">
        ${icon("Rhino")}<span class="caption">My Pattern.3dm (58 KB) - Rhinoceros 5.0 Educational - [Top]</span>
        <span class="window">
          ${[["Min", "Minimize"], ["Max", "Restore"], ["Close", "Close"]].map(([i, l]) => html`<button type="button" aria-label=${l}>${icon(i)}</button>`)}
        </span>
      </header>
      <nav class="menubar">${menus.map((m) => html`<button type="button">${m}</button>`)}</nav>
      <section class="command">
        <div class="history">File successfully written as C:\\Users\\brile\\Desktop\\2019-2020\\Fall Semester 2019\\Arch 321\\2D Lines and Patterns\\My Pattern.3dm</div>
        <div class="spin">${icon("ChevUp")}${icon("ChevDown")}</div>
        <div class="prompt"><label for="cmd">Command:</label><input class="entry" id="cmd" type="text"></div>
        <div class="spin low">${icon("Up")}${icon("Down")}</div>
      </section>
      <div class="tooltabs">
        ${toolTabs.map((t, i) => html`<button type="button" class=${classMap({ ttab: true, on: i === 0 })}>${t}</button>`)}
        <button class="gear" type="button" aria-label="Toolbar options">${icon("Gear")}</button>
      </div>
      <div class="bar main"><div class="strip">${mainTools.map(toolButton)}</div></div>
      <div class="bar second"><div class="short">${secondTools.map(toolButton)}</div></div>
      <main class="work">
        <div class="side">
          <span class="grip"></span>
          ${sideTools.map(toolButton)}
          <button class="more" type="button" aria-label="More tools">»</button>
        </div>
        <div class="center">
          <rhino-viewport></rhino-viewport>
          <div class="viewtabs">
            ${["Perspective", "Top", "Front", "Right"].map((t) => html`<button type="button" class=${classMap({ vtab: true, on: t === "Top" })}>${t}</button>`)}
            <button type="button" class="vtab add" aria-label="Add viewport">✚</button>
          </div>
        </div>
        <property-panel></property-panel>
      </main>
      <footer class="status">
        <span class="cell w38">CPlane</span>
        <span class="cell w59">x 11.179</span>
        <span class="cell w59">y 0.049</span>
        <span class="cell w59">z 0.000</span>
        <span class="cell w59">Inches</span>
        <span class="cell layer w115"><span class="swatch"></span>Default</span>
        ${cells.map(([t, w, on]) => html`<span class="cell ${w} ${on ? "on" : ""}">${t}</span>`)}
        <span class="fill">Minutes from last save: 7</span>
      </footer>
      <task-bar></task-bar>
    `;
  }
}
